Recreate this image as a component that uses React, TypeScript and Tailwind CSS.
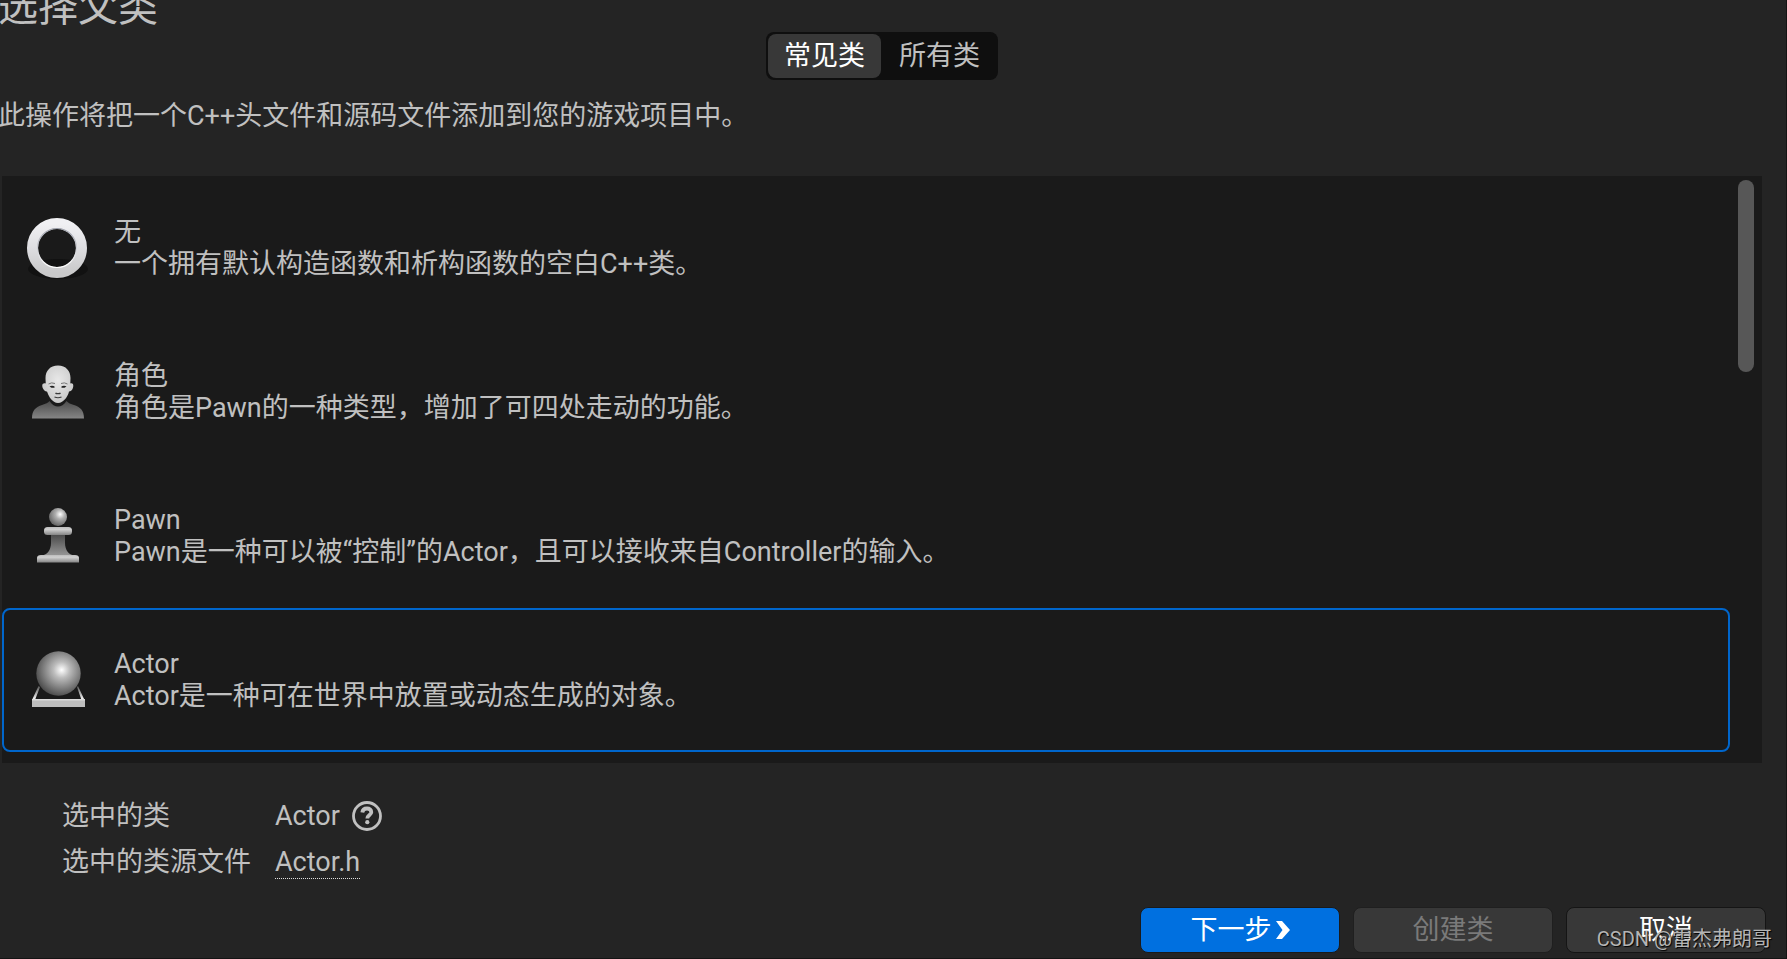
import React, { useState } from "react";

function RingIcon() {
  return (
    <svg viewBox="0 0 64 64" className="size-16 shrink-0" aria-hidden="true">
      <defs>
        <linearGradient id="ringFill" x1="0" y1="0" x2="0" y2="1">
          <stop offset="0" stopColor="#f0f0f3" />
          <stop offset="0.5" stopColor="#dedee1" />
          <stop offset="1" stopColor="#c9c9ca" />
        </linearGradient>
        <linearGradient id="ringEdge" x1="0" y1="0" x2="0" y2="1">
          <stop offset="0" stopColor="#9a9da8" />
          <stop offset="1" stopColor="#ffffff" />
        </linearGradient>
      </defs>
      <ellipse cx="32" cy="53" rx="30" ry="10" fill="#111" />
      <circle cx="31" cy="32" r="24.5" fill="none" stroke="url(#ringFill)" strokeWidth="11" />
      <circle cx="31" cy="32" r="19.5" fill="none" stroke="url(#ringEdge)" strokeWidth="1.2" />
    </svg>
  );
}

function CharacterIcon() {
  return (
    <svg viewBox="0 0 64 64" className="size-16 shrink-0" aria-hidden="true">
      <defs>
        <radialGradient id="headFill" cx="0.5" cy="0.4" r="0.6">
          <stop offset="0" stopColor="#e8e8e8" />
          <stop offset="1" stopColor="#c8c8c8" />
        </radialGradient>
        <linearGradient id="bodyFill" x1="0" y1="0" x2="0" y2="1">
          <stop offset="0" stopColor="#4c4c4c" />
          <stop offset="1" stopColor="#858585" />
        </linearGradient>
      </defs>
      <path d="M6 58.500C6 50 10 47 16 45C20 43.500 22 43 23.500 41C26 45 29 46.500 32 46.500C35 46.500 38 45 40.500 41C42 43 45 44 48 45C54 47 58 50 58 58.500Z" fill="url(#bodyFill)" />
      <path d="M32 5.500C24 5.500 19.500 11 19.500 18C19.500 20 19.800 22 19.700 23.500C16 22.500 15.500 26 17.300 29C18.300 31 20 31.500 21 31.500C22.500 36 25 40 28 41.700C30.500 43.300 33.500 43.300 36 41.700C39 40 42 36 43 31.500C44.500 31.500 45.800 30.500 46.500 29C48 26 47.500 22.500 44.300 23.500C44.300 22 44.500 20 44.500 18C44.500 11 40 5.500 32 5.500Z" fill="url(#headFill)" />
      <path d="M22.500 24Q25.500 22 29 23.500M35 23.500Q38.500 22 41.500 24" fill="none" stroke="#777" strokeWidth="1" />
      <path d="M23.500 26.500Q26.500 25 29 27L28 27.800H25.500ZM40.500 26.500Q37.500 25 35 27L36 27.800H38.500Z" fill="#222" />
      <path d="M29.500 33Q30.500 34 32 33.500Q33.500 34 34.500 33M28.500 37Q32 38.500 35.500 37" fill="none" stroke="#3a3a3a" strokeWidth="1.200" />
    </svg>
  );
}

function PawnIcon() {
  return (
    <svg viewBox="0 0 64 64" className="size-16 shrink-0" aria-hidden="true">
      <defs>
        <radialGradient id="pawnBall" cx="0.62" cy="0.35" r="0.65">
          <stop offset="0" stopColor="#fff" />
          <stop offset="0.4" stopColor="#b0b0b0" />
          <stop offset="1" stopColor="#686868" />
        </radialGradient>
        <linearGradient id="pawnBar" x1="0" y1="0" x2="0" y2="1">
          <stop offset="0" stopColor="#bdbdbd" />
          <stop offset="0.3" stopColor="#d0d0d0" />
          <stop offset="1" stopColor="#858585" />
        </linearGradient>
        <linearGradient id="pawnNeck" x1="0" y1="0" x2="0" y2="1">
          <stop offset="0" stopColor="#484848" />
          <stop offset="1" stopColor="#969696" />
        </linearGradient>
      </defs>
      <circle cx="32" cy="13" r="9" fill="url(#pawnBall)" />
      <path d="M25 30H39V39C39 46 43 51 48 51.500H16C21 51 25 46 25 39Z" fill="url(#pawnNeck)" />
      <rect x="18" y="23" width="28" height="8" rx="3.500" fill="url(#pawnBar)" />
      <path d="M11 58.500V54Q11 51 15 51H49Q53 51 53 54V58.500Z" fill="url(#pawnBar)" />
    </svg>
  );
}

function ActorIcon() {
  return (
    <svg viewBox="0 0 64 64" className="size-16 shrink-0" aria-hidden="true">
      <defs>
        <radialGradient id="actorBall" cx="0.57" cy="0.42" r="0.6">
          <stop offset="0" stopColor="#fff" />
          <stop offset="0.3" stopColor="#bcbcbc" />
          <stop offset="1" stopColor="#4c4c4c" />
        </radialGradient>
        <linearGradient id="actorSide" x1="0" y1="0" x2="0" y2="1">
          <stop offset="0" stopColor="#555" />
          <stop offset="1" stopColor="#fff" />
        </linearGradient>
      </defs>
      <path d="M12.500 38L6 52H9L14 39ZM52 38L58.500 52H55.500L51 39Z" fill="url(#actorSide)" />
      <circle cx="32.500" cy="25.500" r="22.200" fill="url(#actorBall)" />
      <path d="M6 51H59V59H6Z" fill="#bebebe" />
      <path d="M6 51H59V52.500H6Z" fill="#dadada" />
    </svg>
  );
}

const classes = [
  { id: "none", name: "无", text: "一个拥有默认构造函数和析构函数的空白C++类。", Icon: RingIcon },
  { id: "character", name: "角色", text: "角色是Pawn的一种类型，增加了可四处走动的功能。", Icon: CharacterIcon },
  { id: "pawn", name: "Pawn", text: "Pawn是一种可以被“控制”的Actor，且可以接收来自Controller的输入。", Icon: PawnIcon },
  { id: "actor", name: "Actor", text: "Actor是一种可在世界中放置或动态生成的对象。", Icon: ActorIcon },
];

export default function App() {
  const [tab, setTab] = useState("common");
  const [selected, setSelected] = useState("actor");
  const tabClass = (id: string) =>
    tab === id
      ? "h-11 rounded-lg bg-[#383838] px-4 text-white"
      : "h-11 rounded-lg px-4 text-[#c0c0c0]";

  return (
    <div
      lang="zh-CN"
      className="flex min-h-screen flex-col overflow-hidden border-r border-b border-[#141414] bg-[#242424] font-[Roboto,'Noto_Sans_CJK_SC',sans-serif] text-[27px] leading-8 text-[#c0c0c0]"
    >
      <header className="-ml-0.5 grid h-20 grid-cols-[1fr_auto_1fr] pr-5">
        <h1 className="-mt-3 text-[40px] leading-10">选择父类</h1>
        <div role="tablist" className="mt-8 flex h-12 gap-0.5 rounded-lg bg-[#0f0f0f] p-0.5">
          <button role="tab" aria-selected={tab === "common"} className={tabClass("common")} onClick={() => setTab("common")}>
            常见类
          </button>
          <button role="tab" aria-selected={tab === "all"} className={tabClass("all")} onClick={() => setTab("all")}>
            所有类
          </button>
        </div>
      </header>

      <p className="mt-5 -ml-0.5">此操作将把一个C++头文件和源码文件添加到您的游戏项目中。</p>

      <main className="mt-11 mr-6 ml-0.5 flex bg-[#1a1a1a] pb-[11px]">
        <ul role="listbox" aria-label="选择父类" className="min-w-0 flex-1">
          {classes.map(({ id, name, text, Icon }) => (
            <li
              key={id}
              role="option"
              aria-selected={selected === id}
              onClick={() => setSelected(id)}
              className={
                selected === id
                  ? "flex h-36 items-center gap-6 rounded-lg border-2 border-[#0066cc] px-[22px]"
                  : "flex h-36 items-center gap-6 rounded-lg border-2 border-transparent px-[22px]"
              }
            >
              <Icon />
              <div>
                <div>{name}</div>
                <div>{text}</div>
              </div>
            </li>
          ))}
        </ul>
        <div className="w-8 px-2 pt-1">
          <div className="h-48 rounded-full bg-[#575757]" />
        </div>
      </main>

      <dl className="mt-[34px] ml-[62px] grid grid-cols-[189px_auto] justify-start gap-x-6 gap-y-2">
        <dt className="flex h-[38px] items-center">选中的类</dt>
        <dd className="flex items-center gap-3">
          Actor
          <button aria-label="帮助">
            <svg viewBox="0 0 30 30" className="size-[30px]" fill="none" stroke="#c0c0c0">
              <circle cx="15" cy="15" r="13.500" strokeWidth="2.800" />
              <path d="M10.300 11.500C10.600 8.800 12.500 7.500 15 7.500C17.600 7.500 19.300 9 19.300 11.200C19.300 14 15.300 14 15.300 17.500" strokeWidth="3.800" />
              <circle cx="15.300" cy="21.200" r="2.100" fill="#c0c0c0" stroke="none" />
            </svg>
          </button>
        </dd>
        <dt className="flex h-[38px] items-center">选中的类源文件</dt>
        <dd className="flex items-center">
          <a href="#actor" className="border-b border-dotted border-[#e0e0e0]">
            Actor.h
          </a>
        </dd>
      </dl>

      <footer className="mt-[26px] mr-5 mb-1 flex justify-end gap-[13px]">
        <button className="flex h-[46px] w-[200px] items-center justify-center gap-1 rounded-lg border border-[#1a1a1a] bg-[#0070e0] text-white">
          下一步
          <svg viewBox="0 0 14 18" className="h-[18px] w-3.5" aria-hidden="true">
            <path d="M0 0H6L14 9L6 18H0L6.500 9Z" fill="#fff" />
          </svg>
        </button>
        <button disabled className="h-[46px] w-[200px] rounded-lg border border-[#1f1f1f] bg-[#383838] text-[#7a7a7a]">
          创建类
        </button>
        <div className="relative">
          <button className="h-[46px] w-[200px] rounded-lg border border-[#151515] bg-[#383838] text-white">取消</button>
          <span className="pointer-events-none absolute top-4 -right-1.5 text-[20px] whitespace-nowrap text-[#b4b4b4] [text-shadow:1px_1px_1px_#000]">
            CSDN @雷杰弗朗哥
          </span>
        </div>
      </footer>
    </div>
  );
}
